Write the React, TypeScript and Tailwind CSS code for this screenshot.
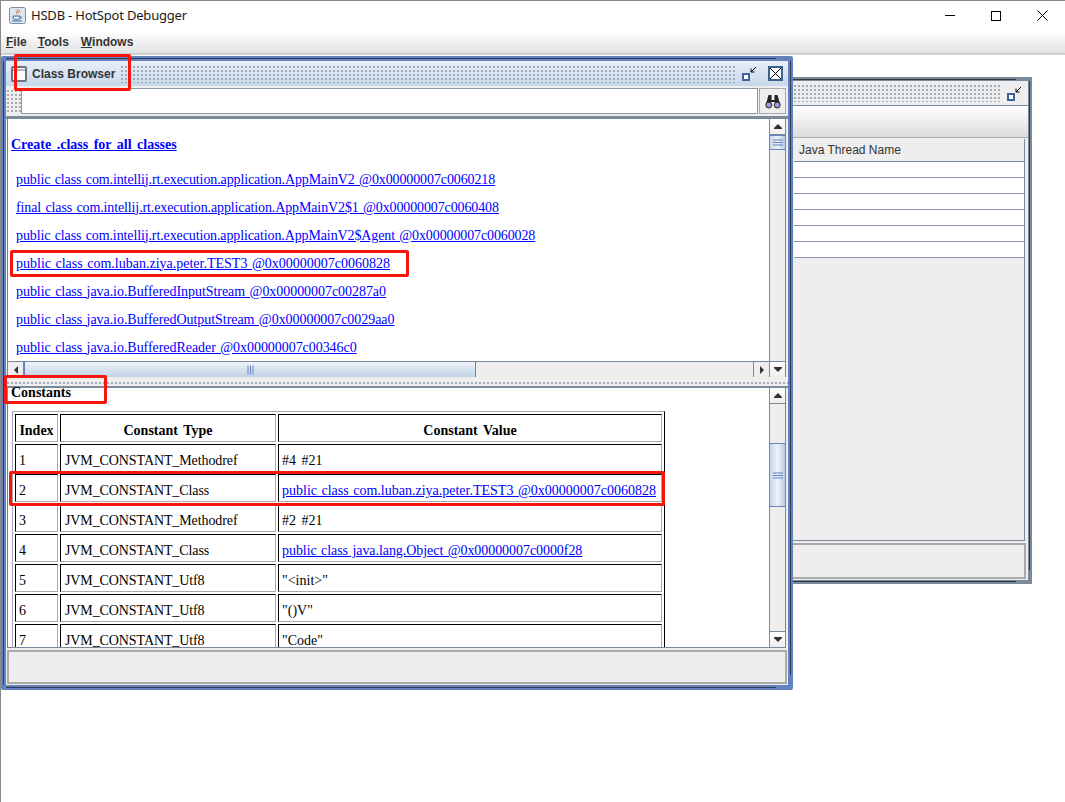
const serif = "font-['Liberation_Serif',serif] [word-spacing:2px]";

const classLinks = [
  { text: "public class com.intellij.rt.execution.application.AppMainV2 @0x00000007c0060218", cls: "tracking-[-0.11px]" },
  { text: "final class com.intellij.rt.execution.application.AppMainV2$1 @0x00000007c0060408", cls: "tracking-[-0.12px]" },
  { text: "public class com.intellij.rt.execution.application.AppMainV2$Agent @0x00000007c0060028", cls: "tracking-[-0.115px]" },
  { text: "public class com.luban.ziya.peter.TEST3 @0x00000007c0060828", cls: "tracking-normal" },
  { text: "public class java.io.BufferedInputStream @0x00000007c00287a0", cls: "tracking-[-0.05px]" },
  { text: "public class java.io.BufferedOutputStream @0x00000007c0029aa0", cls: "tracking-[-0.05px]" },
  { text: "public class java.io.BufferedReader @0x00000007c00346c0", cls: "tracking-[-0.05px]" },
];

const constants: { index: number; type: string; value: string; link?: string }[] = [
  { index: 1, type: "JVM_CONSTANT_Methodref", value: "#4 #21" },
  { index: 2, type: "JVM_CONSTANT_Class", value: "public class com.luban.ziya.peter.TEST3 @0x00000007c0060828", link: "tracking-normal" },
  { index: 3, type: "JVM_CONSTANT_Methodref", value: "#2 #21" },
  { index: 4, type: "JVM_CONSTANT_Class", value: "public class java.lang.Object @0x00000007c0000f28", link: "tracking-[-0.06px]" },
  { index: 5, type: "JVM_CONSTANT_Utf8", value: '"<init>"' },
  { index: 6, type: "JVM_CONSTANT_Utf8", value: '"()V"' },
  { index: 7, type: "JVM_CONSTANT_Utf8", value: '"Code"' },
];

const cell = "border border-t-black border-l-black border-r-[#aaaaaa] border-b-[#aaaaaa] leading-[16px] pt-[6px]";

function Dots({ className }: { className: string }) {
  return <div className={"bg-[radial-gradient(#9aa7b5_0.7px,transparent_0.8px)] bg-[length:4px_4px] " + className} />;
}

function ArrowUp() {
  return (
    <svg width="10" height="6" viewBox="0 0 10 6">
      <path d="M5 0 L9 4 V5 H1 V4 Z" fill="#333" />
    </svg>
  );
}

function ArrowDown() {
  return (
    <svg width="10" height="6" viewBox="0 0 10 6">
      <path d="M1 0 H9 V1 L5 5 L1 1 Z" fill="#333" />
    </svg>
  );
}

function Grip({ vertical }: { vertical?: boolean }) {
  if (vertical) {
    return (
      <svg width="7" height="10" viewBox="0 0 7 10">
        <path d="M1 0.5V9.5M3.5 0.5V9.5M6 0.5V9.5" stroke="#6382bf" />
      </svg>
    );
  }
  return (
    <svg width="10" height="7" viewBox="0 0 10 7">
      <path d="M0 1H10M0 3.5H10M0 6H10" stroke="#6382bf" />
    </svg>
  );
}

function VScrollbar({ thumbTop, thumbHeight }: { thumbTop: number; thumbHeight: number }) {
  return (
    <div className="w-[16px] shrink-0 border-l border-[#7a8a99] bg-[#eeeeee] flex flex-col">
      <div className="h-[16px] shrink-0 flex items-center justify-center bg-gradient-to-b from-white to-[#eeeeee] border-b border-[#7a8a99]">
        <ArrowUp />
      </div>
      <div className="flex-1 relative">
        <div
          className="absolute left-0 right-0 border-y border-[#6382bf] bg-gradient-to-r from-[#c5d5e8] via-[#eef3f9] to-[#b8cde3] flex items-center justify-center"
          style={{ top: thumbTop, height: thumbHeight }}
        >
          <Grip />
        </div>
      </div>
      <div className="h-[16px] shrink-0 flex items-center justify-center bg-gradient-to-b from-white to-[#eeeeee] border-t border-[#7a8a99]">
        <ArrowDown />
      </div>
    </div>
  );
}

function DockIcon() {
  return (
    <svg width="15" height="15" viewBox="0 0 15 15">
      <rect x="1" y="8" width="6" height="6" fill="#fff" stroke="#3f5f9f" strokeWidth="2" />
      <path d="M14 1 L9 6 M9 2.5 V6 H12.5" stroke="#000" fill="none" />
    </svg>
  );
}

function Binoculars() {
  return (
    <svg width="16" height="15" viewBox="0 0 16 15">
      <path d="M3.5 1h3v5h3V1h3l2.5 9H10V8H6v2H1Z" fill="#222" />
      <circle cx="3.8" cy="11" r="3" fill="#9b98d8" stroke="#222" />
      <circle cx="12.2" cy="11" r="3" fill="#9b98d8" stroke="#222" />
    </svg>
  );
}

function JavaIcon() {
  return (
    <svg width="17" height="17" viewBox="0 0 17 17">
      <rect x="0.5" y="0.5" width="16" height="16" rx="2" fill="#dfe6ee" stroke="#7d8ea3" />
      <path d="M8 2c2 2-2 3 0 5M10 3c1 1-1 2 0 3" stroke="#d9622b" fill="none" />
      <path d="M4 9h7v2c0 2-7 2-7 0Z M11 9.5c2 0 2 2 0 2" fill="none" stroke="#3b6ea5" />
      <path d="M3 14h10" stroke="#3b6ea5" />
    </svg>
  );
}

function Annotation({ className }: { className: string }) {
  return <div className={"absolute border-[3px] border-[#f5160e] rounded-[2px] pointer-events-none " + className} />;
}

export default function App() {
  return (
    <div className="relative w-[1065px] h-[802px] overflow-hidden bg-white border-l border-[#8a8a8a] border-t font-['Liberation_Sans',sans-serif]">
      {/* Title bar */}
      <div className="h-[30px] pb-[1px] flex items-center bg-white">
        <div className="ml-[8px] mr-[5px]"><JavaIcon /></div>
        <span className="text-[13px] tracking-[-0.2px] text-[#1a1a1a] font-['Noto_Sans',sans-serif]">HSDB - HotSpot Debugger</span>
        <div className="ml-auto flex items-center">
          <div className="w-[46px] flex justify-center"><div className="w-[10px] h-px bg-black" /></div>
          <div className="w-[46px] flex justify-center"><div className="w-[10px] h-[10px] border border-black" /></div>
          <div className="w-[46px] flex justify-center">
            <svg width="11" height="11" viewBox="0 0 11 11"><path d="M0.5 0.5L10.5 10.5M10.5 0.5L0.5 10.5" stroke="#000" /></svg>
          </div>
        </div>
      </div>
      {/* Menu bar */}
      <div className="h-[24px] flex items-center gap-[11px] pl-[5px] pb-[1px] bg-gradient-to-b from-white to-[#e2e2e2] border-b-2 border-[#cfcfcf] text-[12px] font-bold text-[#333333]">
        <span><u>F</u>ile</span>
        <span><u>T</u>ools</span>
        <span className="ml-[1px]"><u>W</u>indows</span>
      </div>

      {/* Thread window behind */}
      <div className="absolute left-[700px] top-[76px] w-[331px] h-[507px] bg-[#eeeeee] border-[4px] border-[#7a8a99] flex flex-col">
        <div className="h-[25px] shrink-0 flex items-center justify-end pr-[1px] border-b border-[#7a8a99]">
          <Dots className="flex-1 h-[18px]" />
          <div className="w-[26px] flex justify-center"><DockIcon /></div>
        </div>
        <div className="h-[32px] shrink-0 bg-gradient-to-b from-white to-[#dcdcdc] border-b border-[#aaaaaa]" />
        <div className="flex-1 mr-[3px] mt-[1px] border-r border-b border-[#7a8a99] pl-[89px]">
          <div className="h-[23px] flex items-center bg-[#eeeeee] border-b border-[#7a8a99] pl-[5px] text-[12px] text-[#333333]">Java Thread Name</div>
          {[0, 1, 2, 3, 4, 5].map((i) => (
            <div key={i} className="h-[16px] bg-white border-b border-[#8a98a8]" />
          ))}
        </div>
        <div className="h-[36px] shrink-0 ml-[1px] mr-[2px] mt-[2px] mb-[1px] border-2 border-[#aaaaaa]" />
        {/* inner dark lines of the frame */}
        <div className="absolute -top-[2px] left-0 right-[12px] h-px bg-[#2f3a46]" />
        <div className="absolute -bottom-[2px] left-0 right-[12px] h-px bg-[#2f3a46]" />
        <div className="absolute -right-[2px] top-0 bottom-[10px] w-px bg-[#2f3a46]" />
      </div>

      {/* Class browser window */}
      <div className="absolute left-0 top-[55px] w-[792px] h-[634px] bg-[#eeeeee] border-[5px] border-[#6382bf] rounded-[2px] flex flex-col">
        <div className="h-[25px] shrink-0 flex items-center bg-gradient-to-b from-[#e8eff7] to-[#c8d8ea]">
          <svg className="ml-[5px] mr-[5px]" width="16" height="16" viewBox="0 0 16 16">
            <rect x="1" y="1" width="14" height="14" rx="1" fill="#fff" stroke="#6b7480" strokeWidth="2" />
            <path d="M1 4H15" stroke="#6b7480" />
          </svg>
          <span className="text-[12px] font-bold text-[#333333]">Class Browser</span>
          <Dots className="flex-1 h-[18px] ml-[5px]" />
          <div className="ml-[5px]"><DockIcon /></div>
          <div className="ml-[11px] mr-[5px] w-[15px] h-[15px] border-2 border-[#3f5f8f] bg-white flex items-center justify-center">
            <svg width="11" height="11" viewBox="0 0 11 11"><path d="M0 0L11 11M11 0L0 11" stroke="#000" /></svg>
          </div>
        </div>
        {/* Search row */}
        <div className="h-[33px] shrink-0 flex bg-[#eeeeee] border-b-[3px] border-[#7a8a99]">
          <Dots className="w-[15px] mt-[3px] mb-[2px]" />
          <div className="flex-1 bg-white border border-[#8a98a8] mt-[2px] mb-[2px]" />
          <div className="w-[27px] ml-[1px] mt-[2px] mb-[2px] mr-[2px] flex items-center justify-center border border-[#aaaaaa]">
            <Binoculars />
          </div>
        </div>
        {/* Class list */}
        <div className={"h-[258px] shrink-0 flex ml-[1px] mr-[2px] border-x border-[#7a8a99] " + serif}>
          <div className="flex-1 min-w-0 flex flex-col">
            <div className="flex-1 min-h-0 bg-white overflow-hidden pl-[3px] text-[14px]">
              <div className="mt-[17px] text-[14px] font-bold text-[#0000ff] underline leading-[18px]">Create .class for all classes</div>
              <div className="mt-[11px] flex flex-col pl-[5px] [word-spacing:1px]">
                {classLinks.map((link) => (
                  <a key={link.text} className={"h-[28px] flex items-center text-[#0000ff] underline whitespace-pre " + link.cls}>{link.text}</a>
                ))}
              </div>
            </div>
            <div className="h-[16px] shrink-0 flex bg-[#eeeeee] border-t border-[#7a8a99]">
              <div className="w-[16px] flex items-center justify-center border-r border-[#7a8a99]">
                <svg width="6" height="10" viewBox="0 0 6 10"><path d="M5 1V9L1 5Z" fill="#333" /></svg>
              </div>
              <div className="w-[452px] flex items-center justify-center border-x border-[#6382bf] bg-gradient-to-b from-[#eef3f9] to-[#c0d3e8]">
                <Grip vertical />
              </div>
              <div className="flex-1" />
              <div className="w-[16px] flex items-center justify-center border-l border-[#7a8a99]">
                <svg width="6" height="10" viewBox="0 0 6 10"><path d="M1 1V9L5 5Z" fill="#333" /></svg>
              </div>
            </div>
          </div>
          <VScrollbar thumbTop={0} thumbHeight={15} />
        </div>
        {/* Split divider */}
        <div className="h-[11px] shrink-0 pt-[4px] bg-[#eeeeee] border-b-2 border-[#7a8a99]">
          <Dots className="h-[4px]" />
        </div>
        {/* Constants */}
        <div className={"h-[260px] shrink-0 flex ml-[1px] mr-[2px] border-x border-[#7a8a99] border-b " + serif}>
          <div className="flex-1 min-w-0 flex flex-col bg-white pl-[3px] text-[14px] text-black">
            <div className="h-[14px] shrink-0 leading-[10px] font-bold">Constants</div>
            <div className="flex-1 min-h-0 overflow-hidden pt-[9px]">
              <table className="ml-[1px] border-separate border-spacing-[2px] border border-t-[#aaaaaa] border-l-[#aaaaaa] border-r-black border-b-black">
                <thead>
                  <tr>
                    <th className={"w-[43px] h-[28px] font-bold text-center " + cell}>Index</th>
                    <th className={"w-[216px] font-bold text-center " + cell}>Constant Type</th>
                    <th className={"w-[384px] font-bold text-center " + cell}>Constant Value</th>
                  </tr>
                </thead>
                <tbody>
                  {constants.map((row) => (
                    <tr key={row.index}>
                      <td className={"h-[28px] pl-[3px] " + cell}>{row.index}</td>
                      <td className={"pl-[4px] tracking-[-0.1px] " + cell}>{row.type}</td>
                      <td className={"pl-[3px] whitespace-pre " + cell}>
                        {row.link ? <a className={"text-[#0000ff] underline [word-spacing:1px] " + row.link}>{row.value}</a> : row.value}
                      </td>
                    </tr>
                  ))}
                </tbody>
              </table>
            </div>
          </div>
          <VScrollbar thumbTop={39} thumbHeight={64} />
        </div>
        <div className="flex-1 ml-[1px] mr-[1px] mt-[2px] mb-[1px] border-2 border-[#aaaaaa]" />
        {/* inner dark lines of the frame */}
        <div className="absolute -top-[3px] left-0 right-[12px] h-px bg-[#2f3a56]" />
        <div className="absolute -bottom-[3px] left-0 right-[12px] h-px bg-[#2f3a56]" />
        <div className="absolute -right-[3px] top-0 bottom-[10px] w-px bg-[#2f3a56]" />
        <div className="absolute -left-[3px] top-0 bottom-0 w-px bg-[#2f3a56]" />
      </div>

      {/* Red annotations */}
      <Annotation className="left-[13px] top-[53px] w-[117px] h-[37px]" />
      <Annotation className="left-[9px] top-[249px] w-[399px] h-[27px]" />
      <Annotation className="left-[3px] top-[374px] w-[103px] h-[29px]" />
      <Annotation className="left-[8px] top-[470px] w-[656px] h-[35px]" />
    </div>
  );
}
